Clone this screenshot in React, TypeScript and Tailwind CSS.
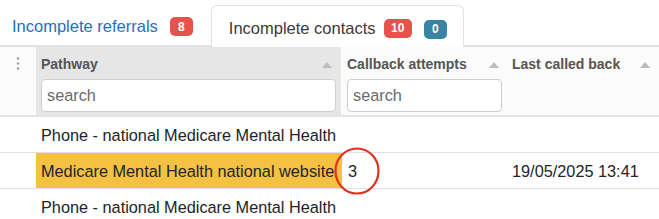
const font = { fontFamily: '"Liberation Sans", Arial, sans-serif' };

function SortArrow() {
  return (
    <svg width="10" height="6" viewBox="0 0 10 6" className="shrink-0">
      <path d="M5 0 L10 6 L0 6 Z" fill="#bdbdbd" />
    </svg>
  );
}

function Badge({ n, tone }: { n: string; tone: "red" | "teal" }) {
  return (
    <span
      className={`inline-flex h-[19px] min-w-[23px] items-center justify-center rounded-[5px] px-[7.5px] text-[12px] font-bold leading-none text-white ${
        tone === "red" ? "bg-[#e5534b]" : "bg-[#3a84a3]"
      }`}
    >
      {n}
    </span>
  );
}

const rows = [
  { pathway: "Phone - national Medicare Mental Health", attempts: "", last: "", hl: false },
  { pathway: "Medicare Mental Health national website", attempts: "3", last: "19/05/2025 13:41", hl: true },
  { pathway: "Phone - national Medicare Mental Health", attempts: "", last: "", hl: false },
];

export default function App() {
  return (
    <div className="h-[219px] w-[659px] overflow-hidden bg-white text-[#212529]" style={font}>
      {/* tabs */}
      <div className="flex h-[47px] border-b-2 border-[#dee2e6] pl-[12px] pt-[5px]">
        <div className="flex items-center gap-[12px] pr-[18px] pt-[3px]">
          <span className="text-[16.5px] text-[#1f6fbf]">Incomplete referrals</span>
          <Badge n="8" tone="red" />
        </div>
        <div className="-mb-[2px] flex items-center gap-[8px] rounded-t-[6px] border border-b-0 border-[#dee2e6] bg-white pl-[17px] pr-[16px] pt-[3px]">
          <span className="text-[16.5px] text-[#3a3a3a]">Incomplete contacts</span>
          <Badge n="10" tone="red" />
          <span className="ml-[4px]">
            <Badge n="0" tone="teal" />
          </span>
        </div>
      </div>

      {/* table */}
      <div className="grid grid-cols-[36px_306px_164px_1fr]">
        {/* header */}
        <div className="flex h-[70px] justify-center border-b-2 border-[#e2e4e6] bg-[#fbfbfb] pt-[10px]">
          <svg width="4" height="13" viewBox="0 0 4 13">
            <circle cx="2" cy="1.5" r="1.2" fill="#9a9a9a" />
            <circle cx="2" cy="6.5" r="1.2" fill="#9a9a9a" />
            <circle cx="2" cy="11.5" r="1.2" fill="#9a9a9a" />
          </svg>
        </div>
        <div className="flex h-[70px] flex-col border-b-2 border-r border-[#e2e4e6] border-r-white bg-[#e6e6e6] pl-[5px] pr-[5px] pt-[7px]">
          <div className="flex items-center justify-between pr-[4px]">
            <span className="text-[14px] font-bold text-[#555]">Pathway</span>
            <SortArrow />
          </div>
          <input
            placeholder="search"
            className="mt-[4px] h-[33px] w-full rounded-[4px] border border-[#cfcfcf] bg-white px-[5px] text-[16.3px] placeholder:text-[#6b6b6b]"
            style={font}
          />
        </div>
        <div className="flex h-[70px] flex-col border-b-2 border-[#e2e4e6] bg-[#fbfbfb] pl-[5px] pr-[4px] pt-[7px]">
          <div className="flex items-center justify-between pr-[3px]">
            <span className="text-[14px] font-bold text-[#555]">Callback attempts</span>
            <SortArrow />
          </div>
          <input
            placeholder="search"
            className="mt-[4px] h-[33px] w-full rounded-[4px] border border-[#cfcfcf] bg-white px-[5px] text-[16.3px] placeholder:text-[#6b6b6b]"
            style={font}
          />
        </div>
        <div className="flex h-[70px] flex-col border-b-2 border-[#e2e4e6] bg-[#fbfbfb] pl-[6px] pr-[9px] pt-[7px]">
          <div className="flex items-center justify-between">
            <span className="text-[14px] font-bold text-[#555]">Last called back</span>
            <SortArrow />
          </div>
        </div>

        {/* body */}
        {rows.map((r, i) => (
          <div key={i} className="contents">
            <div className="h-[36px] border-b border-[#dee2e6]" />
            <div
              className={`flex h-[36px] items-center border-b border-[#dee2e6] pl-[5px] pt-[1px] text-[16.3px] ${
                r.hl ? "bg-[#f4c143]" : ""
              }`}
            >
              {r.pathway}
            </div>
            <div className="relative flex h-[36px] items-center border-b border-[#dee2e6] pl-[6px] pt-[1px] text-[16.3px]">
              {r.attempts}
              {r.hl && (
                <svg
                  className="absolute left-[-9px] top-[-6px]"
                  width="48"
                  height="48"
                  viewBox="0 0 48 48"
                >
                  <ellipse cx="24" cy="24" rx="21.5" ry="22.5" fill="none" stroke="#e0301e" strokeWidth="2.2" />
                </svg>
              )}
            </div>
            <div className="flex h-[36px] items-center border-b border-[#dee2e6] pl-[6px] pt-[1px] text-[16.3px]">
              {r.last}
            </div>
          </div>
        ))}
      </div>
    </div>
  );
}
